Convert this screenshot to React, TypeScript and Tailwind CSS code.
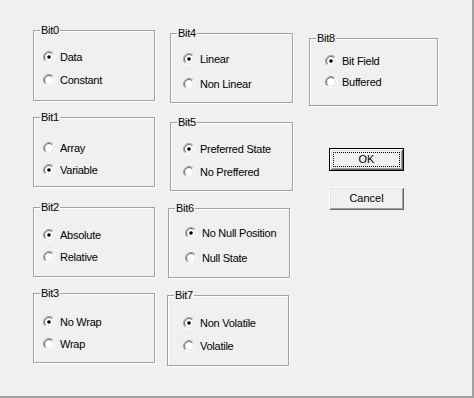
import React from "react";

function Radio({ checked }: { checked: boolean }) {
  const c = 6;
  const arc = (r: number, first: boolean) => {
    const d = r * Math.SQRT1_2;
    const ll = `${c - d} ${c + d}`;
    const ur = `${c + d} ${c - d}`;
    return first ? `M${ll} A${r} ${r} 0 0 1 ${ur}` : `M${ur} A${r} ${r} 0 0 1 ${ll}`;
  };
  return (
    <svg width="12" height="12" viewBox="0 0 12 12" className="shrink-0">
      <circle cx={c} cy={c} r={4.5} fill="#ffffff" />
      <path d={arc(5.5, true)} stroke="#a0a0a0" strokeWidth="1" fill="none" />
      <path d={arc(5.5, false)} stroke="#ffffff" strokeWidth="1" fill="none" />
      <path d={arc(4.5, true)} stroke="#696969" strokeWidth="1" fill="none" />
      <path d={arc(4.5, false)} stroke="#e3e3e3" strokeWidth="1" fill="none" />
      {checked && <circle cx={c} cy={c} r={1.8} fill="#000000" />}
    </svg>
  );
}

type GroupProps = {
  title: string;
  options: [string, string];
  selected: 0 | 1;
  w: string;
  h: string;
  pt: string;
  gap: string;
  pl: string;
  mt?: string;
  ml?: string;
};

function Group({ title, options, selected, w, h, pt, gap, pl, mt = "", ml = "" }: GroupProps) {
  return (
    <div
      className={`relative box-border border border-[#a0a0a0] shadow-[inset_1px_1px_0_#ffffff,1px_1px_0_#ffffff] flex flex-col ${w} ${h} ${pt} ${gap} ${pl} ${mt} ${ml}`}
    >
      <span className="absolute left-[6px] top-[-8px] px-[1px] bg-[#f0f0f0] leading-[14px]">{title}</span>
      {options.map((o, i) => (
        <div key={o} className="flex items-center h-[16px] gap-[5px]">
          <Radio checked={selected === i} />
          <span className="leading-[16px] whitespace-nowrap">{o}</span>
        </div>
      ))}
    </div>
  );
}

export default function App() {
  return (
    <div
      className="w-[474px] h-[398px] box-border bg-[#f0f0f0] border-r-2 border-b-2 border-[#a0a0a0] flex text-[11px] tracking-[-0.25px] text-black pl-[33px] pt-[30px]"
      style={{ fontFamily: '"Liberation Sans", Arial, sans-serif' }}
    >
      <div className="flex flex-col w-[122px]">
        <Group title="Bit0" options={["Data", "Constant"]} selected={0} w="w-[122px]" h="h-[71px]" pt="pt-[18px]" gap="gap-[7px]" pl="pl-[9px]" />
        <Group title="Bit1" options={["Array", "Variable"]} selected={1} w="w-[122px]" h="h-[70px]" pt="pt-[22px]" gap="gap-[6px]" pl="pl-[9px]" mt="mt-[16px]" />
        <Group title="Bit2" options={["Absolute", "Relative"]} selected={0} w="w-[122px]" h="h-[70px]" pt="pt-[19px]" gap="gap-[6px]" pl="pl-[9px]" mt="mt-[20px]" />
        <Group title="Bit3" options={["No Wrap", "Wrap"]} selected={0} w="w-[122px]" h="h-[70px]" pt="pt-[20px]" gap="gap-[6px]" pl="pl-[9px]" mt="mt-[16px]" />
      </div>
      <div className="flex flex-col ml-[12px] pt-[3px] w-[126px]">
        <Group title="Bit4" options={["Linear", "Non Linear"]} selected={0} w="w-[123px]" h="h-[70px]" pt="pt-[17px]" gap="gap-[9px]" pl="pl-[12px]" ml="ml-[3px]" />
        <Group title="Bit5" options={["Preferred State", "No Preffered"]} selected={0} w="w-[123px]" h="h-[69px]" pt="pt-[18px]" gap="gap-[7px]" pl="pl-[12px]" ml="ml-[3px]" mt="mt-[19px]" />
        <Group title="Bit6" options={["No Null Position", "Null State"]} selected={0} w="w-[122px]" h="h-[70px]" pt="pt-[16px]" gap="gap-[9px]" pl="pl-[16px]" ml="ml-[1px]" mt="mt-[17px]" />
        <Group title="Bit7" options={["Non Volatile", "Volatile"]} selected={0} w="w-[122px]" h="h-[71px]" pt="pt-[19px]" gap="gap-[7px]" pl="pl-[15px]" mt="mt-[17px]" />
      </div>
      <div className="flex flex-col ml-[16px] pt-[8px]">
        <Group title="Bit8" options={["Bit Field", "Buffered"]} selected={0} w="w-[129px]" h="h-[68px]" pt="pt-[14px]" gap="gap-[5px]" pl="pl-[15px]" />
        <button className="mt-[42px] ml-[20px] w-[75px] h-[23px] box-border border border-black bg-[#f0f0f0] p-0 tracking-normal">
          <div className="w-full h-full box-border shadow-[inset_1px_1px_0_#ffffff,inset_-1px_-1px_0_#696969,inset_2px_2px_0_#e3e3e3,inset_-2px_-2px_0_#a0a0a0] p-[3px]">
            <div className="w-full h-full border border-dotted border-black flex items-center justify-center leading-[13px]">OK</div>
          </div>
        </button>
        <button className="mt-[16px] ml-[20px] w-[75px] h-[23px] box-border bg-[#f0f0f0] p-0 shadow-[inset_1px_1px_0_#ffffff,inset_-1px_-1px_0_#696969,inset_2px_2px_0_#e3e3e3,inset_-2px_-2px_0_#a0a0a0] flex items-center justify-center tracking-normal">
          Cancel
        </button>
      </div>
    </div>
  );
}
